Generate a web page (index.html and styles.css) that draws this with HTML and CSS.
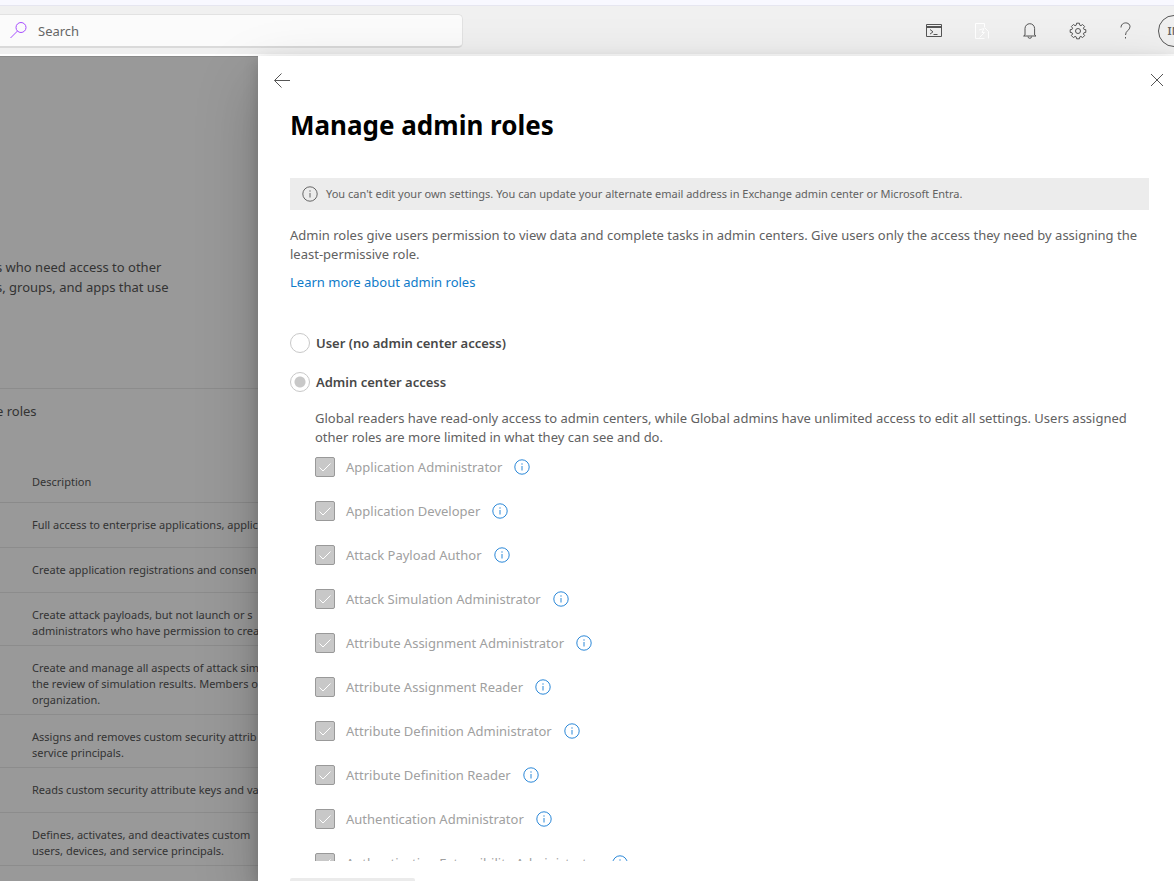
FILE: index.html
```html
<!DOCTYPE html>
<html lang="en">
	<head>
		<title>Manage admin roles</title>
		<meta charset="utf-8">
		<meta name="viewport" content="width=device-width, initial-scale=1">
		<link rel="stylesheet" href="styles.css">
	</head>

	<body>
		<svg class="sprite" width="0" height="0" aria-hidden="true">
			<symbol id="info" viewBox="0 0 16 16">
				<circle cx="8" cy="8" r="7.2"/>
				<path d="M8 7v4.5M8 4.3v1.4"/>
			</symbol>
		</svg>

		<header class="topbar">
			<label class="search">
				<svg width="18" height="18" viewBox="0 0 18 18"><circle cx="11" cy="5.5" r="5"/><path d="M7.5 9L.5 16"/></svg>
				<input type="text" placeholder="Search" aria-label="Search">
			</label>
			<nav class="tools">
				<button type="button" aria-label="Cloud shell">
					<svg width="18" height="18" viewBox="0 0 18 18"><path d="M1.5 2.5h15v12h-15zM1.5 4.5h15M1.5 5.5h15M5 7.5l3 2.300-3 2.300M8.500 12.500h4"/></svg>
				</button>
				<button type="button" class="faint" aria-label="Documents">
					<svg width="18" height="18" viewBox="0 0 18 18"><path d="M11.5 5V1.5h-9v15h9M6 8l5-1.500-2 4h2.500l-5 5M11.500 5.500l4 4v7"/></svg>
				</button>
				<button type="button" aria-label="Notifications">
					<svg width="18" height="18" viewBox="0 0 18 18"><path d="M4 13V6.500a4.800 4.800 0 0 1 9.600 0V13l1.400 1H2.600zM7 14.500a1.800 1.800 0 0 0 3.600 0"/></svg>
				</button>
				<button type="button" aria-label="Settings">
					<svg width="18" height="18" viewBox="0 0 18 18"><path d="M7.6 1.200h2.800l.4 2 1.100.5 1.700-1.200 2 2-1.200 1.700.5 1.100 1.900.4v2.700l-1.900.4-.5 1.100 1.200 1.700-2 2-1.700-1.200-1.100.5-.4 1.900H7.600l-.4-1.900-1.100-.5-1.700 1.200-2-2 1.200-1.700-.5-1.100-1.900-.4V7.700l1.900-.4.5-1.100-1.200-1.700 2-2 1.700 1.200 1.100-.5z"/><circle cx="9" cy="9" r="2.5"/></svg>
				</button>
				<button type="button" aria-label="Help">
					<svg width="18" height="18" viewBox="0 0 18 18"><path d="M4 5.500c0-6 9-6 9-.8 0 3.600-4.500 4-4.500 8.300M8.500 15v1.500"/></svg>
				</button>
				<button type="button" class="avatar"><span>IN</span></button>
			</nav>
		</header>

		<div class="content">
			<main class="page">
				<p class="intro">s who need access to other<br>s, groups, and apps that use</p>
				<div class="commands">e roles</div>
				<table class="roles">
					<thead>
						<tr><th>Description</th></tr>
					</thead>
					<tbody>
						<tr><td>Full access to enterprise applications, applic</td></tr>
						<tr><td>Create application registrations and consen</td></tr>
						<tr><td>Create attack payloads, but not launch or s<br>administrators who have permission to crea</td></tr>
						<tr><td>Create and manage all aspects of attack sim<br>the review of simulation results. Members o<br>organization.</td></tr>
						<tr><td>Assigns and removes custom security attrib<br>service principals.</td></tr>
						<tr><td>Reads custom security attribute keys and va</td></tr>
						<tr><td>Defines, activates, and deactivates custom<br>users, devices, and service principals.</td></tr>
					</tbody>
				</table>
			</main>

			<section class="panel">
				<div class="panel_nav">
					<button type="button" aria-label="Back">
						<svg width="16" height="16" viewBox="0 0 16 16"><path d="M16 8.500H.8M7.500 1.500l-7 7 7 7"/></svg>
					</button>
					<button type="button" aria-label="Close">
						<svg width="14" height="14" viewBox="0 0 14 14"><path d="M1 1l12 12M13 1L1 13"/></svg>
					</button>
				</div>

				<div class="panel_body">
					<h1>Manage admin roles</h1>
					<div class="message">
						<svg class="info" width="16" height="16"><use href="#info"/></svg>
						<span>You can't edit your own settings. You can update your alternate email address in Exchange admin center or Microsoft Entra.</span>
					</div>
					<p class="lead">Admin roles give users permission to view data and complete tasks in admin centers. Give users only the access they need by assigning the least-permissive role.</p>
					<a class="learn" href="#">Learn more about admin roles</a>

					<form>
						<label class="radio"><input type="radio" name="access" disabled>User (no admin center access)</label>
						<label class="radio"><input type="radio" name="access" checked disabled>Admin center access</label>

						<div class="access">
							<p>Global readers have read-only access to admin centers, while Global admins have unlimited access to edit all settings. Users assigned other roles are more limited in what they can see and do.</p>
							<ul>
								<li><label><input type="checkbox" checked disabled>Application Administrator</label><svg class="info" width="16" height="16"><use href="#info"/></svg></li>
								<li><label><input type="checkbox" checked disabled>Application Developer</label><svg class="info" width="16" height="16"><use href="#info"/></svg></li>
								<li><label><input type="checkbox" checked disabled>Attack Payload Author</label><svg class="info" width="16" height="16"><use href="#info"/></svg></li>
								<li><label><input type="checkbox" checked disabled>Attack Simulation Administrator</label><svg class="info" width="16" height="16"><use href="#info"/></svg></li>
								<li><label><input type="checkbox" checked disabled>Attribute Assignment Administrator</label><svg class="info" width="16" height="16"><use href="#info"/></svg></li>
								<li><label><input type="checkbox" checked disabled>Attribute Assignment Reader</label><svg class="info" width="16" height="16"><use href="#info"/></svg></li>
								<li><label><input type="checkbox" checked disabled>Attribute Definition Administrator</label><svg class="info" width="16" height="16"><use href="#info"/></svg></li>
								<li><label><input type="checkbox" checked disabled>Attribute Definition Reader</label><svg class="info" width="16" height="16"><use href="#info"/></svg></li>
								<li><label><input type="checkbox" checked disabled>Authentication Administrator</label><svg class="info" width="16" height="16"><use href="#info"/></svg></li>
								<li><label><input type="checkbox" checked disabled>Authentication Extensibility Administrator</label><svg class="info" width="16" height="16"><use href="#info"/></svg></li>
							</ul>
						</div>
					</form>
				</div>

				<footer class="panel_footer">
					<button type="button" disabled aria-label="Save changes"></button>
				</footer>
			</section>
		</div>
	</body>
</html>
```

FILE: styles.css
```css
* {
	box-sizing: border-box;
}
body, h1, p, ul {
	margin: 0;
	padding: 0;
}
li {
	list-style: none;
}
button {
	padding: 0;
	border: none;
	background: none;
}
svg {
	display: block;
	flex: none;
	fill: none;
	stroke: #555;
}
.sprite {
	position: absolute;
}

body {
	display: flex;
	flex-direction: column;
	height: 100vh;
	overflow: hidden;
	font: 13px/19px "Noto Sans", "Open Sans", sans-serif;
	color: #616161;
	background: #fff;
}

/* top bar */
.topbar {
	display: flex;
	flex: none;
	align-items: center;
	justify-content: space-between;
	height: 56px;
	overflow: hidden;
	padding-top: 3px;
	border-top: 5px solid #f8f8ff;
	border-bottom: 2px solid #fff;
	background: #f0f0f0;
	box-shadow: inset 0 1px #e6e6f0;
}
.search {
	display: flex;
	align-items: center;
	gap: 10px;
	width: 463px;
	height: 34px;
	padding-left: 10px;
	border: 1px solid #e2e2e2;
	border-left: none;
	border-bottom: 2px solid #dadada;
	border-radius: 0 5px 5px 0;
	background: #fbfbfb;
}
.search svg {
	stroke: #a64dff;
}
.search input {
	flex: 1;
	min-width: 0;
	padding: 1px 0 0;
	border: none;
	outline: none;
	background: none;
	font: inherit;
}
.search input::placeholder {
	color: #666;
	opacity: 1;
}
.tools {
	display: flex;
	align-items: center;
	margin-right: -24px;
}
.tools button {
	display: flex;
	align-items: center;
	justify-content: center;
	width: 48px;
	height: 34px;
}
.tools .faint svg {
	stroke: #fff;
}
.tools .avatar span {
	width: 32px;
	height: 32px;
	border: 1px solid #555;
	border-radius: 50%;
	font: 600 11px/30px "Noto Sans", "Open Sans", sans-serif;
	color: #666;
}

.content {
	display: grid;
	flex: 1;
	grid-template-columns: 258px 1fr;
	min-height: 0;
}

/* dimmed page behind the panel */
.page {
	overflow: hidden;
	border-top: 1px solid #8a8a8a;
	background: #999;
	color: #333;
	white-space: nowrap;
}
.intro {
	height: 332px;
	padding-top: 200px;
	border-bottom: 1px solid #8c8c8c;
	margin-left: -4px;
	line-height: 20px;
}
.commands {
	height: 73px;
	padding-top: 13px;
	margin-left: -4px;
}
.roles {
	width: 100%;
	border-collapse: collapse;
	font-size: 11px;
	line-height: 16px;
}
.roles th, .roles td {
	height: 45px;
	padding: 14px 0 6px 32px;
	border-bottom: 1px solid #8c8c8c;
	font-weight: normal;
	text-align: left;
	vertical-align: top;
}
.roles th {
	height: 40px;
	padding-top: 12px;
	border-bottom-color: #8a8a8a;
}

/* panel */
.panel {
	position: relative;
	z-index: 1;
	display: flex;
	flex-direction: column;
	min-width: 0;
	min-height: 0;
	background: #fff;
	box-shadow: 0 26px 58px rgba(0, 0, 0, .22), 0 5px 14px rgba(0, 0, 0, .18);
}
.panel_nav {
	display: flex;
	flex: none;
	align-items: center;
	justify-content: space-between;
	height: 48px;
	padding: 0 10px 0 16px;
}
.panel_body {
	flex: 1;
	min-height: 0;
	overflow: hidden;
	padding: 0 25px 0 32px;
}
.panel_body h1 {
	font-size: 26px;
	line-height: 42px;
	color: #000;
}
.message {
	display: flex;
	align-items: center;
	gap: 8px;
	min-height: 32px;
	margin: 32px 0 16px;
	padding: 0 12px;
	background: #ececec;
	font-size: 11px;
	line-height: 16px;
}
.message .info {
	stroke: #666;
}
.learn {
	display: block;
	margin-top: 9px;
	color: #0f7bc9;
	text-decoration: none;
}
form {
	padding-top: 41px;
}
.radio {
	display: flex;
	align-items: center;
	gap: 6px;
	height: 20px;
	margin-bottom: 19px;
	font-weight: 600;
	color: #484848;
}
.radio input {
	width: 20px;
	height: 20px;
	margin: 0;
	appearance: none;
	border: 1px solid #c8c8c8;
	border-radius: 50%;
	background: #fff;
}
.radio input:checked {
	background: radial-gradient(circle, #c8c8c8 5px, #fff 6px);
}
.access {
	padding-left: 25px;
	margin-top: -2px;
}
.access ul {
	display: grid;
	gap: 24px;
	padding-top: 10px;
}
.access li, .access label {
	display: flex;
	align-items: center;
}
.access li {
	gap: 12px;
	height: 20px;
}
.access label {
	gap: 11px;
	color: #a0a0a0;
}
.access input {
	width: 20px;
	height: 20px;
	margin: 0;
	appearance: none;
	border: 1px solid #999;
	border-radius: 2px;
	background: #c8c8c8 url("data:image/svg+xml,%3Csvg xmlns='http://www.w3.org/2000/svg' width='18' height='18' fill='none' stroke='white'%3E%3Cpath d='M3.5 9.5l3.5 3.5 7.500-7.500'/%3E%3C/svg%3E") center no-repeat;
}
.access .info {
	stroke: #2b88d8;
}
.panel_footer {
	flex: none;
	height: 20px;
	overflow: hidden;
	padding: 17px 32px 0;
}
.panel_footer button {
	width: 125px;
	height: 32px;
	border-radius: 2px;
	background: #ebebeb;
}
```
